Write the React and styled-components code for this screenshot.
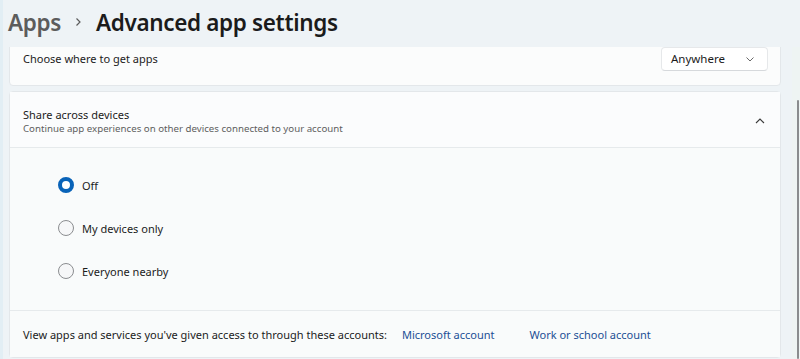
import React from "react";
import styled, { createGlobalStyle } from "styled-components";

const Global = createGlobalStyle`
  html, body { margin: 0; padding: 0; }
  body { font-family: "Noto Sans", "Open Sans", sans-serif; background: #eef3f6; }
`;

const Page = styled.div`
  position: relative;
  width: 800px;
  height: 359px;
  overflow: hidden;
  background: #eef3f6;
  display: flex;
  flex-direction: column;
  border-left: 3px solid #e2eef4;
  box-sizing: border-box;
`;

const Header = styled.div`
  height: 47px;
  flex: none;
  display: flex;
  align-items: center;
  padding-left: 5px;
  font-size: 22.5px;
  font-weight: 600;
  letter-spacing: -0.35px;
`;

const Crumb = styled.span`
  color: ${(p) => (p.$current ? "#1b1b1b" : "#5c5c5c")};
  margin-top: -3px;
`;

const Sep = styled.span`
  display: inline-flex;
  width: 35px;
  justify-content: center;
  margin-top: -3px;
`;

const Scroller = styled.div`
  flex: 1;
  overflow: hidden;
  padding: 0 19px 0 6px;
  display: flex;
  flex-direction: column;
  gap: 5px;
`;

const Card = styled.div`
  background: #fbfcfc;
  border: 1px solid #e3e7ea;
  border-radius: 4px;
  flex: none;
`;

const TopCard = styled(Card)`
  margin-top: -16px;
  height: 53px;
  display: flex;
  align-items: center;
  justify-content: space-between;
  padding: 0 12px 0 13px;
`;

const Label = styled.div`
  font-size: 11px;
  color: #1b1b1b;
`;

const Sub = styled.div`
  font-size: 9.7px;
  color: #5e5e5e;
  margin-top: 0;
`;

const Dropdown = styled.div`
  width: 107px;
  height: 24px;
  box-sizing: border-box;
  background: #ffffff;
  border: 1px solid #e6e8ea;
  border-bottom-color: #d6d9dc;
  border-radius: 4px;
  display: flex;
  align-items: center;
  justify-content: space-between;
  padding: 0 12px 0 9px;
  font-size: 11.5px;
  color: #1b1b1b;
  margin-top: 0;
`;

const Expander = styled(Card)`
  display: flex;
  flex-direction: column;
`;

const ExpHead = styled.div`
  height: 56px;
  display: flex;
  align-items: center;
  justify-content: space-between;
  padding: 2px 14px 0 13px;
  box-sizing: border-box;
  border-bottom: 1px solid #e6eaec;
  background: #fbfcfd;
`;

const Options = styled.div`
  display: flex;
  flex-direction: column;
  gap: 21px;
  padding: 26px 0 28px 48px;
  border-bottom: 1px solid #e6eaec;
  background: #f9fbfb;
`;

const Option = styled.label`
  display: flex;
  align-items: center;
  gap: 8px;
  height: 22px;
  font-size: 11px;
  color: #1b1b1b;
`;

const Radio = styled.span`
  width: 16px;
  height: 16px;
  border-radius: 50%;
  box-sizing: border-box;
  background: ${(p) => (p.$on ? "#ffffff" : "#f6f7f8")};
  border: ${(p) => (p.$on ? "4.5px solid #0963b8" : "1px solid #8b8d90")};
  flex: none;
`;

const Footer = styled.div`
  height: 46px;
  display: flex;
  align-items: center;
  padding-left: 13px;
  font-size: 11px;
  color: #1b1b1b;
  background: #f9fbfb;
`;

const Link = styled.span`
  color: #1c4f95;
  margin-left: ${(p) => p.$gap}px;
`;

const ScrollThumb = styled.div`
  position: absolute;
  right: 1px;
  top: 100px;
  bottom: 0;
  width: 2px;
  background: #8a8c8e;
  border-radius: 1px;
`;

const ScrollTrack = styled.div`
  position: absolute;
  right: 0;
  top: 47px;
  bottom: 0;
  width: 8px;
  background: #eef4f3;
`;

const ChevronRight = () => (
  <svg width="10" height="10" viewBox="0 0 10 10">
    <path d="M3.5 1.5 L7 5 L3.5 8.5" fill="none" stroke="#5c5c5c" strokeWidth="1.2" />
  </svg>
);

const ChevronDown = () => (
  <svg width="10" height="10" viewBox="0 0 10 10">
    <path d="M1.5 3.5 L5 7 L8.5 3.5" fill="none" stroke="#6a6a6a" strokeWidth="1" />
  </svg>
);

const ChevronUp = () => (
  <svg width="12" height="12" viewBox="0 0 12 12">
    <path d="M2 8 L6 4 L10 8" fill="none" stroke="#3a3a3a" strokeWidth="1.1" />
  </svg>
);

export default function App() {
  return (
    <>
      <Global />
      <Page>
        <Header>
          <Crumb>Apps</Crumb>
          <Sep>
            <ChevronRight />
          </Sep>
          <Crumb $current>Advanced app settings</Crumb>
        </Header>
        <Scroller>
          <TopCard>
            <Label>Choose where to get apps</Label>
            <Dropdown>
              <span>Anywhere</span>
              <ChevronDown />
            </Dropdown>
          </TopCard>
          <Expander>
            <ExpHead>
              <div>
                <Label>Share across devices</Label>
                <Sub>Continue app experiences on other devices connected to your account</Sub>
              </div>
              <ChevronUp />
            </ExpHead>
            <Options>
              <Option>
                <Radio $on />
                Off
              </Option>
              <Option>
                <Radio />
                My devices only
              </Option>
              <Option>
                <Radio />
                Everyone nearby
              </Option>
            </Options>
            <Footer>
              View apps and services you've given access to through these accounts:
              <Link $gap={15}>Microsoft account</Link>
              <Link $gap={35}>Work or school account</Link>
            </Footer>
          </Expander>
        </Scroller>
        <ScrollTrack />
        <ScrollThumb />
      </Page>
    </>
  );
}
